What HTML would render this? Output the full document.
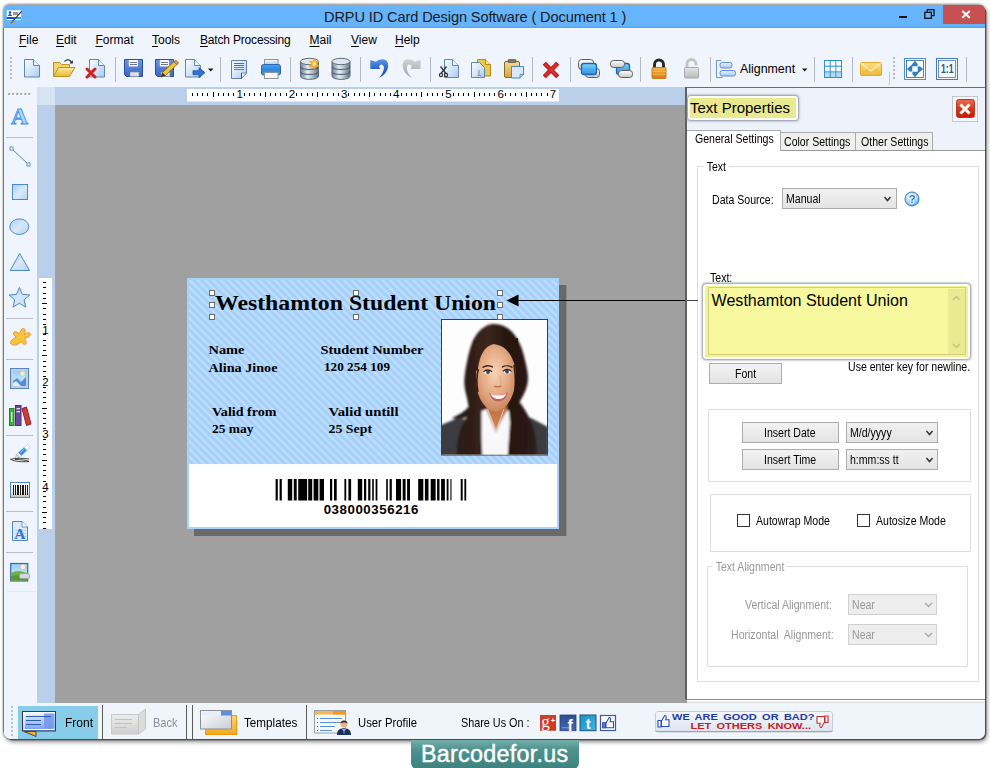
<!DOCTYPE html>
<html lang="en">
<head>
<meta charset="utf-8">
<title>DRPU ID Card Design Software ( Document 1 )</title>
<style>
*{box-sizing:border-box;margin:0;padding:0}
html,body{width:990px;height:768px;background:#fff;overflow:hidden}
body{position:relative;font-family:"Liberation Sans",sans-serif;font-size:12px;color:#000}
.abs,.abs div,.abs svg{position:absolute}
.t{position:absolute;white-space:nowrap;line-height:1}
u{text-decoration:underline;text-underline-offset:2px}
/* window */
#win{left:4px;top:5px;width:981px;height:734px;background:#f0f4fc;border-radius:6px 6px 7px 7px;
 box-shadow:1.300px 1.300px 0 0 #4d4d4d,2px 2.500px 4px 0 rgba(0,0,0,.45),-1px -.5px 2.500px 0 rgba(0,0,0,.42)}
#title{left:0;top:0;width:981px;height:23px;background:#65b4fc;border-radius:5px 5px 0 0}
#titletxt{font-size:14.6px;letter-spacing:-.12px;color:#1a1a1a;left:320px;top:4.500px}
#close{left:939px;top:0;width:42px;height:19px;background:#c75050;border-radius:0 5px 0 0}
/* menu */
.menu{font-size:12px;top:29px;color:#000}
/* toolbar */
.sep{width:1px;background:#a9b4c6;top:53px;height:27px}
/* main regions */
#hr{left:33px;top:82px;width:650px;height:18px;background:#b9cfea}
#hrc{left:33px;top:82px;width:18px;height:18px;background:#d6e3f2}
#vr{left:33px;top:100px;width:18px;height:598px;background:#b9cfea}
#canvas{left:51px;top:100px;width:632px;height:598px;background:#a0a0a0}
#panel{left:681px;top:82px;width:300px;height:613px;background:#fff;border-left:2px solid #5f5f5f;border-top:1.500px solid #6a6a6a;border-bottom:1px solid #8c8c8c}
#bottom{left:0;top:698px;width:981px;height:36px;background:#f0f4fb;border-radius:0 0 7px 7px}
.bt{font-size:12.800px;transform-origin:0 0}
#wm{left:410.500px;top:739.500px;width:168.500px;height:29.500px;background:linear-gradient(#74aeaa,#4e918d 35%,#3d827e);border-radius:0 0 6px 6px}
#wmt{left:10.500px;top:3.400px;font-size:23.300px;color:#fff;letter-spacing:.28px;-webkit-text-stroke:.45px #fff}
</style>
</head>
<body>
<div id="win" class="abs">
  <div style="left:-1px;top:23px;width:1px;height:704px;background:#7a7a7a"></div>
  <div id="title"></div>
  <div id="titletxt" class="t">DRPU ID Card Design Software ( Document 1 )</div>
  <div id="close"></div>
  <svg id="titlesvg" style="left:-4px;top:-5px" width="990" height="30" viewBox="0 0 990 30">
<rect x="4" y="26.500" width="981" height="1.500" fill="#5ea6ee"/>
<!-- app icon -->
<rect x="6.800" y="10.300" width="14.400" height="9.800" fill="#fff"/><rect x="6.800" y="17" width="14.400" height="2" fill="#2f9cf0"/><rect x="6.800" y="17" width="7.500" height="2" fill="#0a4fe0"/>
<circle cx="10" cy="12.600" r="1.300" fill="#1d4fc0"/><path d="M8 16c0-2.300 4-2.300 4 0z" fill="#1d4fc0"/><rect x="13" y="12" width="5.300" height="3.200" fill="#9a9a9a"/>
<path d="M21.600 11.400l-9 10" stroke="#3a2a20" stroke-width="1.100"/><path d="M13.200 20.600l-2.700 2.200 1.500 .2z" fill="#a8642a" stroke="#a8642a" stroke-width=".8"/>
<!-- controls -->
<rect x="899" y="16" width="8" height="2" fill="#111"/>
<rect x="924.800" y="12.300" width="6.600" height="6" fill="none" stroke="#111" stroke-width="1.300"/><path d="M927.300 12v-2.300h6.700v6h-2.300" fill="none" stroke="#111" stroke-width="1.300"/>
<path d="M962.300 11l7.400 6.800M969.700 11l-7.400 6.800" stroke="#fff" stroke-width="2"/>
</svg>
  <!-- MENU -->
  <div id="menubar">
    <span class="t menu" style="left:15px"><u>F</u>ile</span>
    <span class="t menu" style="left:52px"><u>E</u>dit</span>
    <span class="t menu" style="left:91.500px"><u>F</u>ormat</span>
    <span class="t menu" style="left:148px"><u>T</u>ools</span>
    <span class="t menu" style="left:196px;letter-spacing:-.18px"><u>B</u>atch Processing</span>
    <span class="t menu" style="left:305.500px"><u>M</u>ail</span>
    <span class="t menu" style="left:347px"><u>V</u>iew</span>
    <span class="t menu" style="left:391px"><u>H</u>elp</span>
  </div>
  <!-- TOOLBAR -->
  <div id="toolbar"><svg id="tbsvg" style="left:-4px;top:-5px" width="990" height="100" viewBox="0 0 990 100">
<defs>
 <linearGradient id="gPage" x1="0" y1="0" x2="1" y2="1"><stop offset="0" stop-color="#fbfdff"/><stop offset=".55" stop-color="#d3e4f7"/><stop offset="1" stop-color="#a9c9ef"/></linearGradient>
 <linearGradient id="gFold" x1="0" y1="0" x2="0" y2="1"><stop offset="0" stop-color="#fbe9a0"/><stop offset="1" stop-color="#e9b92e"/></linearGradient>
 <linearGradient id="gFlop" x1="0" y1="0" x2="0" y2="1"><stop offset="0" stop-color="#6a97e6"/><stop offset="1" stop-color="#3a64c6"/></linearGradient>
 <linearGradient id="gDb" x1="0" y1="0" x2="1" y2="0"><stop offset="0" stop-color="#8f9aa3"/><stop offset=".45" stop-color="#eef2f4"/><stop offset="1" stop-color="#6f7d88"/></linearGradient>
 <linearGradient id="gLock" x1="0" y1="0" x2="0" y2="1"><stop offset="0" stop-color="#f7b64a"/><stop offset="1" stop-color="#dc7a10"/></linearGradient>
 <linearGradient id="gUnlock" x1="0" y1="0" x2="0" y2="1"><stop offset="0" stop-color="#e6e6e6"/><stop offset="1" stop-color="#b9b9b9"/></linearGradient>
 <linearGradient id="gBlueR" x1="0" y1="0" x2="0" y2="1"><stop offset="0" stop-color="#86d6fb"/><stop offset=".5" stop-color="#4fb0ee"/><stop offset="1" stop-color="#3a94de"/></linearGradient>
 <linearGradient id="gGrayR" x1="0" y1="0" x2="0" y2="1"><stop offset="0" stop-color="#ffffff"/><stop offset="1" stop-color="#c9c9c9"/></linearGradient>
 <linearGradient id="gEnv" x1="0" y1="0" x2="0" y2="1"><stop offset="0" stop-color="#fbe08a"/><stop offset="1" stop-color="#f0b731"/></linearGradient>
 <linearGradient id="gClip" x1="0" y1="0" x2="0" y2="1"><stop offset="0" stop-color="#f3d98f"/><stop offset="1" stop-color="#d9a441"/></linearGradient>
</defs>
<!-- grip -->
<g fill="#b4bac6"><rect x="10" y="57" width="2" height="2"/><rect x="10" y="61" width="2" height="2"/><rect x="10" y="65" width="2" height="2"/><rect x="10" y="69" width="2" height="2"/><rect x="10" y="73" width="2" height="2"/><rect x="10" y="77" width="2" height="2"/></g>
<!-- separators -->
<g stroke="#b4b9c3" stroke-width="1">
<path d="M115.5 57v25M220.5 57v25M290.5 57v25M360.5 57v25M430.5 57v25M532.5 57v25M570.5 57v25M640.5 57v25M710.5 57v25M814.5 57v25M852.5 57v25M966.5 57v25"/>
</g>
<path d="M889.5 72v13" stroke="#c4cad6" stroke-width="1"/>
<g fill="#b4bac6"><rect x="893" y="57" width="2" height="2"/><rect x="893" y="61" width="2" height="2"/><rect x="893" y="65" width="2" height="2"/><rect x="893" y="69" width="2" height="2"/><rect x="893" y="73" width="2" height="2"/><rect x="893" y="77" width="2" height="2"/></g>
<!-- new -->
<path d="M24.5 59.5h9l6 6v11.5h-15z" fill="url(#gPage)" stroke="#5a86c2"/><path d="M33.5 59.5v6h6" fill="#eaf2fb" stroke="#5a86c2"/>
<!-- open -->
<path d="M53.5 76.5v-14h6l2 2h8v4" fill="#f3d46b" stroke="#b8961f"/><path d="M53.5 76.500l5-9h16.500l-5.500 9z" fill="url(#gFold)" stroke="#b8961f"/>
<path d="M64.500 61.500c2-2.500 5.500-2.500 7 .8" fill="none" stroke="#222" stroke-width="1.100"/><path d="M72.800 60.200v3.200h-3.200z" fill="#222"/>
<!-- close doc -->
<path d="M89.500 59.500h9l6 6v11.500h-15z" fill="url(#gPage)" stroke="#5a86c2"/><path d="M98.500 59.500v6h6" fill="#eaf2fb" stroke="#5a86c2"/>
<path d="M87 69l8 8M95 69l-8 8" stroke="#cf1f1f" stroke-width="3" stroke-linecap="round"/>
<!-- save -->
<g id="flop"><path d="M124.500 59.500h18v17h-16l-2-2z" fill="url(#gFlop)" stroke="#2a4f9c"/><rect x="128.800" y="60" width="9.200" height="6.500" fill="#f4f6fb"/><path d="M130 62.500h7M130 64.500h7" stroke="#77797f"/><rect x="130" y="72" width="9" height="4.500" fill="#dfe4d8" stroke="#7f8aa6" stroke-width=".6"/></g>
<!-- save edit -->
<use href="#flop" x="31"/>
<path d="M161 77l1.500-4.500 11.500-11 3 3-11.500 11z" fill="#f2c531" stroke="#7a5a10" stroke-width=".8"/><path d="M174 61.500l1.800-1.500 3 3-1.800 1.500z" fill="#e48a8a" stroke="#7a5a10" stroke-width=".6"/><path d="M161 77l1.500-4.500 3 3z" fill="#333"/>
<!-- export -->
<path d="M185.500 59.500h9l6 6v11.500h-15z" fill="url(#gPage)" stroke="#5a86c2"/><path d="M194.500 59.500v6h6" fill="#eaf2fb" stroke="#5a86c2"/>
<path d="M193 70.800h6v-3l6 4.900-6 4.900v-3h-6z" fill="#2f73d6" stroke="#1b4fa6" stroke-width=".8"/>
<path d="M208 68.500h5.400l-2.700 3z" fill="#111"/>
<!-- note doc -->
<path d="M231.500 60.500h15v12.500l-5 5.500h-10z" fill="url(#gPage)" stroke="#5f7fb8"/><path d="M234 63.500h10M234 65.500h10" stroke="#2f6fe0" stroke-width="1"/><path d="M234 67.500h10M234 69.500h10" stroke="#3a9a8a" stroke-width="1"/><path d="M246.500 73h-5v5.500z" fill="#f4f7fc" stroke="#5f7fb8" stroke-width=".8"/><path d="M241.500 73v5.500" stroke="#3a4f80" stroke-width="1"/>
<!-- printer -->
<defs><linearGradient id="gPrn" x1="0" y1="0" x2="0" y2="1"><stop offset="0" stop-color="#4fa0ea"/><stop offset=".5" stop-color="#2f86de"/><stop offset="1" stop-color="#4a9ae6"/></linearGradient><linearGradient id="gPap" x1="0" y1="0" x2="0" y2="1"><stop offset="0" stop-color="#fdfdfd"/><stop offset="1" stop-color="#b9bcc4"/></linearGradient></defs>
<rect x="264.500" y="59.500" width="13.500" height="6" fill="url(#gPap)" stroke="#8f939b"/><rect x="261.500" y="64.500" width="19" height="10.500" rx="2" fill="url(#gPrn)" stroke="#2769b4"/><rect x="264.500" y="72.500" width="13.500" height="6" fill="#f7f7f7" stroke="#8f939b"/>
<!-- db1 -->
<defs><linearGradient id="gDb2" x1="0" y1="0" x2="1" y2="0"><stop offset="0" stop-color="#6f8498"/><stop offset=".4" stop-color="#e6edf2"/><stop offset=".7" stop-color="#a9b8c6"/><stop offset="1" stop-color="#5f7386"/></linearGradient><radialGradient id="gStar"><stop offset="0" stop-color="#fffbe0"/><stop offset=".45" stop-color="#fbc02a"/><stop offset="1" stop-color="#f39a12"/></radialGradient></defs>
<g id="db"><path d="M300.500 61.500v14.500c0 4.500 18 4.500 18 0v-14.500" fill="url(#gDb2)" stroke="#5a6c7d"/><ellipse cx="309.500" cy="61.500" rx="9" ry="3.200" fill="#dfe7ee" stroke="#5a6c7d"/><path d="M300.500 66.500c0 4 18 4 18 0M300.500 71.500c0 4 18 4 18 0" fill="none" stroke="#4f6072" stroke-width="1.100"/></g>
<path d="M314.300 58.500l1.300 3.200 3.400-.6-2.100 2.700 2.100 2.700-3.400-.6-1.300 3.200-1.300-3.200-3.400 .6 2.100-2.700-2.100-2.700 3.400 .6z" fill="url(#gStar)" stroke="#f6a61c" stroke-width=".8" stroke-linejoin="round"/>
<use href="#db" x="31.500"/>
<!-- undo -->
<defs><linearGradient id="gUndo" x1="0" y1="0" x2="0" y2="1"><stop offset="0" stop-color="#5a95ea"/><stop offset=".5" stop-color="#2c66cc"/><stop offset="1" stop-color="#1a4aa8"/></linearGradient>
<linearGradient id="gRedo" x1="0" y1="0" x2="0" y2="1"><stop offset="0" stop-color="#cfd1d3"/><stop offset="1" stop-color="#a2a5a8"/></linearGradient></defs>
<path d="M370.300 60L370.300 69L380.200 69C378.500 66.500 379.500 64.800 381.500 64.600C385.500 65.500 384.500 72 379 78C386 74.500 389 68.500 388 63.500C387 59 381.500 57.800 376 61.800Z" fill="url(#gUndo)"/>
<!-- redo -->
<path transform="translate(790.800 0) scale(-1 1)" d="M370.300 60L370.300 69L380.200 69C378.500 66.500 379.500 64.800 381.500 64.600C385.500 65.500 384.500 72 379 78C386 74.500 389 68.500 388 63.500C387 59 381.500 57.800 376 61.800Z" fill="url(#gRedo)"/>
<!-- cut -->
<path d="M444.500 59.500h8l6 6v12h-14z" fill="url(#gPage)" stroke="#5a86c2"/><path d="M452.500 59.500v6h6" fill="#eaf2fb" stroke="#5a86c2"/>
<path d="M440.500 66.500l5.500 7M446.500 66.500l-5.500 7" stroke="#333" stroke-width="1.300"/><circle cx="441" cy="75" r="1.600" fill="none" stroke="#333" stroke-width="1.200"/><circle cx="446" cy="75" r="1.600" fill="none" stroke="#333" stroke-width="1.200"/>
<!-- copy -->
<path d="M477.500 59.500h8l5 5v11.500h-13z" fill="#efc84a" stroke="#b18b1d"/><path d="M485.500 59.500v5h5" fill="#f9e7a6" stroke="#b18b1d"/>
<path d="M471.500 62.500h8l5 5v10h-13z" fill="url(#gPage)" stroke="#5a86c2"/><path d="M479 70v5M477.500 75.500h3.500" stroke="#8f8f8f" stroke-width="1"/>
<!-- paste -->
<rect x="504.500" y="61.500" width="15" height="16" rx="1.500" fill="url(#gClip)" stroke="#8a6a24"/><rect x="508" y="59.500" width="8" height="3" rx="1" fill="#777" stroke="#444" stroke-width=".6"/>
<path d="M511.500 66.500h12v8l-3.500 3.500h-8.500z" fill="#d9e8fb" stroke="#4f82c8"/><path d="M523.500 74.500h-3.500v3.500" fill="#b7d0f0" stroke="#4f82c8" stroke-width=".8"/>
<!-- delete X -->
<path d="M544.300 63.300l13.400 13.400M557.700 63.300l-13.400 13.400" stroke="#b81414" stroke-width="4.400" stroke-linecap="butt"/><path d="M545 64l12 12M557 64l-12 12" stroke="#e23030" stroke-width="2.200" stroke-linecap="butt"/>
<!-- bring front -->
<rect x="578.500" y="59.500" width="15" height="10" rx="3" fill="url(#gGrayR)" stroke="#5e5e5e"/><rect x="585.500" y="68.500" width="14" height="9" rx="3" fill="url(#gGrayR)" stroke="#5e5e5e"/>
<rect x="581.500" y="63.500" width="15" height="11" rx="2.500" fill="url(#gBlueR)" stroke="#1767b4" stroke-width="1.300"/>
<!-- send back -->
<rect x="616.500" y="63.500" width="13" height="11" rx="2.500" fill="url(#gBlueR)" stroke="#1767b4" stroke-width="1.300"/>
<rect x="610.500" y="60.500" width="14" height="7" rx="3" fill="url(#gGrayR)" stroke="#5e5e5e"/><rect x="618.500" y="70.500" width="14" height="7" rx="3" fill="url(#gGrayR)" stroke="#5e5e5e"/>
<!-- lock -->
<path d="M654.500 68.500v-4a4.500 4.500 0 0 1 9 0v4" fill="none" stroke="#262626" stroke-width="2.900"/><rect x="652" y="67.500" width="14" height="11" rx="1" fill="url(#gLock)" stroke="#c06a0c" stroke-width=".8"/><path d="M652.500 71.500h13M652.500 74.500h13" stroke="#f9c76a" stroke-width=".7" opacity=".8"/>
<!-- unlock -->
<path d="M687 68v-4a4.500 4.500 0 0 1 9 0v1.500" fill="none" stroke="#c4c4c4" stroke-width="2.900"/><rect x="684.500" y="67.500" width="14" height="10.500" rx="1" fill="url(#gUnlock)" stroke="#a9a9a9"/>
<!-- alignment -->
<defs><linearGradient id="gAl" x1="0" y1="0" x2="0" y2="1"><stop offset="0" stop-color="#e4f0fc"/><stop offset="1" stop-color="#a9cdf4"/></linearGradient></defs>
<path d="M721.500 60.500h-5v17h6" fill="none" stroke="#6f95cc"/><rect x="720" y="62.500" width="12" height="5.500" rx="2.200" fill="url(#gAl)" stroke="#5f8dcf"/><rect x="720" y="70.500" width="15.500" height="5.500" rx="2.200" fill="url(#gAl)" stroke="#5f8dcf"/>
<path d="M802 68.500h5.400l-2.700 3z" fill="#111"/>
<!-- grid -->
<rect x="824" y="60" width="18" height="18" fill="#2f8fd0"/><g fill="#f2f9fe"><rect x="825" y="61" width="4.700" height="4.700"/><rect x="830.700" y="61" width="4.700" height="4.700"/><rect x="836.300" y="61" width="4.700" height="4.700"/><rect x="825" y="66.700" width="4.700" height="4.700"/><rect x="830.700" y="66.700" width="4.700" height="4.700"/><rect x="836.300" y="66.700" width="4.700" height="4.700"/></g><g fill="#b4dbf3"><rect x="825" y="72.300" width="4.700" height="4.700"/><rect x="830.700" y="72.300" width="4.700" height="4.700"/><rect x="836.300" y="72.300" width="4.700" height="4.700"/></g>
<!-- envelope -->
<rect x="860.500" y="62.500" width="21" height="13" rx="1" fill="url(#gEnv)" stroke="#e3a82a"/><path d="M861 63l10 8 10-8" fill="none" stroke="#fdf0c0" stroke-width="1.200"/><path d="M861 75l7.500-6M881 75l-7.500-6" stroke="#e9b546" stroke-width="1"/>
<!-- fit -->
<rect x="904.500" y="58.500" width="21" height="21" fill="#fff" stroke="#4a90cf"/><rect x="906.500" y="60.500" width="17" height="17" fill="none" stroke="#2e5f9e" stroke-width=".8"/>
<path d="M915 60.800l4.800 5.700h-9.600zM915 77.200l4.800-5.700h-9.600zM906.800 69l5.700-4.800v9.600zM923.200 69l-5.700-4.800v9.600z" fill="#2f7fc4"/><rect x="912.500" y="66.500" width="5" height="5" fill="#fff"/>
<!-- 1:1 -->
<rect x="936.500" y="58.500" width="21" height="21" fill="#f4f8fd" stroke="#4a78b8"/><rect x="938.500" y="60.500" width="17" height="17" fill="none" stroke="#4a78b8" stroke-width=".8"/>
<text x="941" y="73.400" font-family="Liberation Sans, sans-serif" font-weight="bold" font-size="12" textLength="12.500" lengthAdjust="spacingAndGlyphs" fill="#1f5a86">1:1</text>
</svg>
<span class="t" id="aligntxt" style="left:736px;top:57.500px;font-size:12.400px">Alignment</span>
</div>
  <!-- LEFTBAR -->
  <div id="leftbar"><svg id="lbsvg" style="left:-4px;top:-5px" width="60" height="710" viewBox="0 0 60 710">
<defs>
 <linearGradient id="gShape" x1="0" y1="0" x2="1" y2="1"><stop offset="0" stop-color="#a9cdf3"/><stop offset=".5" stop-color="#d8e9fa"/><stop offset="1" stop-color="#b5d4f4"/></linearGradient>
 <linearGradient id="gSky" x1="0" y1="0" x2="0" y2="1"><stop offset="0" stop-color="#8fd0f5"/><stop offset="1" stop-color="#dff1fb"/></linearGradient>
</defs>
<!-- grip -->
<g fill="#fff"><rect x="8.9" y="94" width="2" height="2"/><rect x="12.9" y="94" width="2" height="2"/><rect x="17.0" y="94" width="2" height="2"/><rect x="21.0" y="94" width="2" height="2"/><rect x="25.1" y="94" width="2" height="2"/><rect x="29.1" y="94" width="2" height="2"/></g><g fill="#a4a8b0"><rect x="8.1" y="93" width="2" height="2"/><rect x="12.1" y="93" width="2" height="2"/><rect x="16.2" y="93" width="2" height="2"/><rect x="20.2" y="93" width="2" height="2"/><rect x="24.3" y="93" width="2" height="2"/><rect x="28.3" y="93" width="2" height="2"/></g>
<!-- separators -->
<path d="M6 137.500h27M6 318.500h27M6 359.500h27M6 435.500h27M6 511.500h27M6 552.500h27" stroke="#b9bcc2" stroke-width="1"/>
<path d="M7 591.500h28" stroke="#e4e8ef" stroke-width="1"/>
<!-- A -->
<text x="19.400" y="123.500" font-family="Liberation Serif, serif" font-weight="bold" font-size="23.500" text-anchor="middle" fill="#b4d6f7" stroke="#3f92ee" stroke-width=".9" paint-order="fill">A</text>
<!-- line -->
<path d="M11.500 148.500l17 16" stroke="#4a86c6" stroke-width="1"/><rect x="10" y="147" width="3" height="3" fill="#fff" stroke="#3f7fc0" stroke-width=".8"/><rect x="27" y="163" width="3" height="3" fill="#fff" stroke="#3f7fc0" stroke-width=".8"/>
<!-- rect -->
<rect x="12.500" y="184.500" width="15" height="15" fill="url(#gShape)" stroke="#4b8acb"/>
<!-- ellipse -->
<ellipse cx="19.300" cy="226.700" rx="9.500" ry="7.800" fill="url(#gShape)" stroke="#4b8acb"/>
<!-- triangle -->
<path d="M19.700 253.500l9.800 17h-19.300z" fill="url(#gShape)" stroke="#4b8acb"/>
<!-- star -->
<path d="M19.400 287.500l2.900 6.800 7.400 .7-5.600 4.900 1.700 7.200-6.400-3.800-6.400 3.800 1.700-7.200-5.600-4.900 7.400-.7z" fill="url(#gShape)" stroke="#4b8acb" stroke-linejoin="round"/>
<!-- splat -->
<path d="M22 329c2-1.500 3.500 0 3 2.500l-.8 3c2-1 4-2.500 5.500-1.500 1.500 1.200 .5 3-1.500 4l-4 2c1.500 1.500 3 3.500 1.500 5-1.500 1.200-3.500-.5-4.500-2.500-1.500 1.500-3.500 3-6 3.500-3 .5-5-1-4.500-3 .5-2 3-3.500 5.500-5-1.500-1-3.500-2.500-2.500-4.500 1.200-1.800 4 0 5.500 1.200z" fill="#f9c63a" stroke="#f0903a" stroke-width="1" stroke-linejoin="round"/>
<!-- image icon -->
<rect x="10.500" y="368.500" width="18" height="20" fill="#c9ccd2" stroke="#4f86c4"/><rect x="13" y="371" width="13" height="15" fill="url(#gSky)"/><path d="M13 381l4-3 4 4 5-5v9h-13z" fill="#4f8fdc"/><path d="M13 383l3-2 5 5h-8z" fill="#dfeefb"/><circle cx="22.500" cy="373.500" r="2.300" fill="#fde6c8"/>
<!-- books -->
<rect x="9.500" y="408.500" width="4.500" height="17" fill="#3fae3f" stroke="#2a7f2a"/><rect x="11" y="412" width="1.500" height="10" fill="#c6f0c6"/>
<rect x="15.500" y="405.500" width="5.500" height="20" fill="#6a4a9a" stroke="#48307a"/><rect x="16.500" y="408" width="3.500" height="1.300" fill="#e6dcf5"/><rect x="16.500" y="411" width="3.500" height="1.300" fill="#e6dcf5"/>
<path d="M22 408.500l4.500-1.500 4.500 17-4.500 1.500z" fill="#cf3a3a" stroke="#962222"/>
<!-- pen -->
<path d="M14.7 458.8 L19.5 457.0 L16.9 454.2 Z" fill="#e9edf3" stroke="#7b8596" stroke-width=".5"/><path d="M19.5 457.0 L21.3 455.4 L18.7 452.6 L16.9 454.2 Z" fill="#f4f7fb" stroke="#9aa5b8" stroke-width=".4"/><path d="M21.3 455.4 L26.8 450.3 L24.3 447.5 L18.7 452.6 Z" fill="#2f8ef0" stroke="#1f6fd0" stroke-width=".4"/><path d="M26.8 450.3 L30.3 447.2 L27.7 444.4 L24.3 447.5 Z" fill="#fbfcfe" stroke="#a7b0c0" stroke-width=".5"/><path d="M20.0 452.9 L24.5 448.8" stroke="#8cc6fa" stroke-width=".9"/><path d="M10.500 459.300c5-1.300 12-1.300 18.500-.3M10.500 459.300c4 2.400 12 2.700 18.500 2.200c-3-1.500-8-2-14-2" fill="none" stroke="#1a1a1a" stroke-width=".8"/>
<!-- barcode -->
<defs><linearGradient id="gBc" x1="0" y1="0" x2="0" y2="1"><stop offset="0" stop-color="#fff"/><stop offset=".6" stop-color="#f4f4f4"/><stop offset="1" stop-color="#b9b9b9"/></linearGradient></defs><rect x="10.500" y="482.500" width="19" height="15" fill="url(#gBc)" stroke="#4f86c4"/>
<g fill="#1a1a1a"><rect x="13" y="485" width="1" height="10"/><rect x="15" y="485" width="1" height="10"/><rect x="17" y="485" width="2" height="10"/><rect x="20" y="485" width="1" height="10"/><rect x="22" y="485" width="2" height="10"/><rect x="25" y="485" width="1" height="10"/><rect x="27" y="485" width="1" height="10"/></g>
<!-- doc A -->
<path d="M12.500 521.500h9.500l5.500 5.500v13.500h-15z" fill="#dbe9fa" stroke="#4f86c4"/><path d="M22 521.500v5.500h5.500" fill="#f4f9ff" stroke="#4f86c4" stroke-width=".8"/>
<path d="M15 530.500h11M15 533.500h11M15 536.500h11" stroke="#b0c4dc" stroke-width=".7"/>
<text x="19.800" y="539" font-family="Liberation Serif, serif" font-weight="bold" font-size="15.500" text-anchor="middle" fill="#2f78cf">A</text>
<!-- picture -->
<rect x="10.700" y="563.500" width="17" height="17.500" fill="url(#gSky)" stroke="#3a68b8" stroke-width="1.200"/><path d="M11.300 573c4-2.500 9-2.500 15.800 0v7.400h-15.800z" fill="#6fae3c"/><path d="M11.300 576c5-1.500 10-1 15.800 1v3.400h-15.800z" fill="#5a982e"/><circle cx="23" cy="567" r="2.800" fill="#fdf3e6" stroke="#f0a8a0" stroke-width=".7"/>
<rect x="19.500" y="573.500" width="10" height="5" rx="1.500" fill="#d5d8dd" stroke="#9aa0aa" stroke-width=".8"/>
</svg>
</div>
  <!-- RULERS + CANVAS -->
  <div id="hr"></div><div id="hrc"></div><div id="vr"></div>
  <div id="canvas"></div>
<svg id="rulsvg" style="left:-4px;top:-5px" width="700" height="710" viewBox="0 0 700 710">
<rect x="187" y="89" width="372" height="12.500" fill="#fff"/>
<rect x="39" y="278" width="13" height="251" fill="#fff"/>
<g id="hticks" stroke="#000" stroke-width="1"><path d="M192.5 93v3M197.5 93v3M202.5 93v3M207.5 93v3M213.5 92v5M218.5 93v3M223.5 93v3M228.5 93v3M233.5 93v3M244.5 93v3M249.5 93v3M254.5 93v3M260.5 93v3M265.5 92v5M270.5 93v3M275.5 93v3M280.5 93v3M286.5 93v3M296.5 93v3M301.5 93v3M307.5 93v3M312.5 93v3M317.5 92v5M322.5 93v3M327.5 93v3M333.5 93v3M338.5 93v3M348.5 93v3M354.5 93v3M359.5 93v3M364.5 93v3M369.5 92v5M374.5 93v3M380.5 93v3M385.5 93v3M390.5 93v3M401.5 93v3M406.5 93v3M411.5 93v3M416.5 93v3M421.5 92v5M427.5 93v3M432.5 93v3M437.5 93v3M442.5 93v3M453.5 93v3M458.5 93v3M463.5 93v3M468.5 93v3M474.5 92v5M479.5 93v3M484.5 93v3M489.5 93v3M494.5 93v3M505.5 93v3M510.5 93v3M515.5 93v3M521.5 93v3M526.5 92v5M531.5 93v3M536.5 93v3M541.5 93v3M547.5 93v3"/></g>
<g id="vticks" stroke="#000" stroke-width="1"><path d="M43 282.5h3M43 287.5h3M43 293.5h3M43 298.5h3M42 303.5h5M43 308.5h3M43 314.5h3M43 319.5h3M43 324.5h3M43 334.5h3M43 340.5h3M43 345.5h3M43 350.5h3M42 355.5h5M43 361.5h3M43 366.5h3M43 371.5h3M43 376.5h3M43 387.5h3M43 392.5h3M43 397.5h3M43 402.5h3M42 408.5h5M43 413.5h3M43 418.5h3M43 423.5h3M43 428.5h3M43 439.5h3M43 444.5h3M43 449.5h3M43 454.5h3M42 460.5h5M43 465.5h3M43 470.5h3M43 475.5h3M43 481.5h3M43 491.5h3M43 496.5h3M43 501.5h3M43 507.5h3M42 512.5h5M43 517.5h3M43 522.5h3M43 528.5h3"/></g>
<g font-family="Liberation Sans, sans-serif" font-size="11.500" fill="#000" text-anchor="middle"><text x="239.7" y="97.600">1</text><text x="291.9" y="97.600">2</text><text x="344.1" y="97.600">3</text><text x="396.3" y="97.600">4</text><text x="448.5" y="97.600">5</text><text x="500.7" y="97.600">6</text><text x="552.9" y="97.600">7</text></g>
<g font-family="Liberation Sans, sans-serif" font-size="11.500" fill="#000" text-anchor="middle"><text x="45.500" y="333.9">1</text><text x="45.500" y="386.1">2</text><text x="45.500" y="438.3">3</text><text x="45.500" y="490.5">4</text></g>
</svg>

  <!-- CARD -->
  <div id="cardwrap"><svg id="cardsvg" style="left:-4px;top:-5px" width="720" height="560" viewBox="0 0 720 560">
<defs>
 <pattern id="stripes" width="7.700" height="7.700" patternUnits="userSpaceOnUse" patternTransform="translate(189.700 280)">
  <rect width="7.700" height="7.700" fill="#a4d0fc"/>
  <path d="M-2 -2l12 12M-9.700 -2l12 12M5.700 -2l12 12" stroke="#c0dfff" stroke-width="2.300"/>
 </pattern>
 <filter id="blur1" x="-20%" y="-20%" width="140%" height="140%"><feGaussianBlur stdDeviation="1.200"/></filter>
 <filter id="blur2" x="-20%" y="-20%" width="140%" height="140%"><feGaussianBlur stdDeviation=".6"/></filter>
 <clipPath id="photoclip"><rect x="442" y="320" width="105" height="134.500"/></clipPath>
</defs>
<!-- shadow -->
<rect x="194" y="285" width="372.400" height="251" fill="#696969"/>
<!-- card -->
<rect x="187" y="278" width="372" height="251" fill="#a9d2fb"/>
<rect x="189" y="280" width="368" height="184" fill="url(#stripes)"/>
<rect x="189" y="464" width="368" height="63" fill="#fff"/>
<!-- barcode -->
<g fill="#000" id="bars"><rect x="275.6" y="479" width="2.2" height="21.500"/><rect x="279.6" y="479" width="2.2" height="21.500"/><rect x="287.8" y="479" width="4.4" height="21.500"/><rect x="293.8" y="479" width="2.9" height="21.500"/><rect x="298.2" y="479" width="8.9" height="21.500"/><rect x="308.2" y="479" width="4.0" height="21.500"/><rect x="313.6" y="479" width="4.7" height="21.500"/><rect x="319.6" y="479" width="4.4" height="21.500"/><rect x="330.0" y="479" width="2.2" height="21.500"/><rect x="334.0" y="479" width="2.7" height="21.500"/><rect x="344.4" y="479" width="1.8" height="21.500"/><rect x="348.4" y="479" width="2.7" height="21.500"/><rect x="357.8" y="479" width="4.4" height="21.500"/><rect x="364.0" y="479" width="2.2" height="21.500"/><rect x="368.2" y="479" width="2.2" height="21.500"/><rect x="372.2" y="479" width="1.6" height="21.500"/><rect x="375.6" y="479" width="1.8" height="21.500"/><rect x="386.2" y="479" width="1.6" height="21.500"/><rect x="389.6" y="479" width="2.2" height="21.500"/><rect x="396.0" y="479" width="5.1" height="21.500"/><rect x="402.7" y="479" width="2.9" height="21.500"/><rect x="407.1" y="479" width="2.9" height="21.500"/><rect x="418.2" y="479" width="5.1" height="21.500"/><rect x="424.9" y="479" width="3.6" height="21.500"/><rect x="430.7" y="479" width="4.9" height="21.500"/><rect x="437.1" y="479" width="2.4" height="21.500"/><rect x="441.1" y="479" width="3.8" height="21.500"/><rect x="446.7" y="479" width="1.8" height="21.500"/><rect x="450.4" y="479" width="1.1" height="21.500"/><rect x="460.7" y="479" width="2.0" height="21.500"/><rect x="464.4" y="479" width="1.8" height="21.500"/></g>
<text x="371.300" y="513.500" font-family="Liberation Sans, sans-serif" font-weight="bold" font-size="13.300" letter-spacing=".55" text-anchor="middle" fill="#000">038000356216</text>
<!-- text -->
<g font-family="Liberation Serif, serif" font-weight="bold" fill="#000">
<text id="ctitle" x="215" y="310" font-size="20" textLength="281" lengthAdjust="spacingAndGlyphs">Westhamton Student Union</text>
<g font-size="13">
<text x="208.500" y="353.500" textLength="36" lengthAdjust="spacingAndGlyphs">Name</text>
<text x="208.500" y="371.500" textLength="69" lengthAdjust="spacingAndGlyphs">Alina Jinoe</text>
<text x="320.500" y="353.500" textLength="103" lengthAdjust="spacingAndGlyphs">Student Number</text>
<text x="324" y="370.500" textLength="66" lengthAdjust="spacingAndGlyphs">120 254 109</text>
<text x="212" y="415.500" textLength="64.500" lengthAdjust="spacingAndGlyphs">Valid from</text>
<text x="212" y="433" textLength="41.500" lengthAdjust="spacingAndGlyphs">25 may</text>
<text x="328.500" y="415.500" textLength="70" lengthAdjust="spacingAndGlyphs">Valid untill</text>
<text x="328.500" y="433" textLength="43.500" lengthAdjust="spacingAndGlyphs">25 Sept</text>
</g></g>
<!-- photo -->
<rect x="441.500" y="319.500" width="106" height="135.500" fill="#fdfdfd" stroke="#3c3c3c"/>
<g clip-path="url(#photoclip)">
<defs>
<radialGradient id="gFace" cx=".48" cy=".42" r=".62"><stop offset="0" stop-color="#f7d3b5"/><stop offset=".55" stop-color="#e6ab84"/><stop offset="1" stop-color="#c5825a"/></radialGradient>
<linearGradient id="gHair" gradientUnits="userSpaceOnUse" x1="463" y1="0" x2="537" y2="0"><stop offset="0" stop-color="#2a1a15"/><stop offset=".35" stop-color="#3d261d"/><stop offset=".6" stop-color="#24150f"/><stop offset="1" stop-color="#2e1c16"/></linearGradient>
<linearGradient id="gNeck" x1="0" y1="0" x2="0" y2="1"><stop offset="0" stop-color="#b9683a"/><stop offset="1" stop-color="#d78a58"/></linearGradient>
</defs>
<g filter="url(#blur1)">
<!-- jacket -->
<path d="M440 425.500l18-7.500 10 2v38h-28z" fill="#3a3a3f"/><path d="M548 427l-18-9.500-8 3 4 37h22z" fill="#3a3a3f"/>
<path d="M505 440l6 18h-8z" fill="#2e2e33"/>
<!-- hair mass -->
<path d="M494 324C502 324 509 328 513 333C519 340 522 348 524 356C526 364 528 372 528 378C528 386 525 393 519.500 402C524 408 529 416 532 424C536 434 537.500 445 536 458L507.500 458L509 420L498 408L487 420L483 458L457 458C456 446 458 436 461 428C463 424 465 420 467 417C462 419 456 419.500 452 418C459 415 465 411 468.500 407C468 402 467 398 466 394C464.500 388 464 383 464.500 378C465 372 466 366 467 362C468.500 354 470 348 472 343C475 335 481 328 487 325.500C489 324.500 491 324 494 324Z" fill="url(#gHair)"/>
<!-- shirt -->
<path d="M481.500 411l6-2 8.500 22 8-22 5 2 1 12-2.500 35h-25l-1-20z" fill="#f8f8fb"/>
<!-- neck -->
<path d="M487.500 400h19l.5 11-7 12-4 10-4-10-5-12z" fill="url(#gNeck)"/>
</g>
<g filter="url(#blur2)">
<!-- face -->
<path d="M476 376C476 364 478 352 483 347C488 343 504 343 509 347C514 352 515.500 364 515.500 376C515.500 388 513 396 509 402C505 408 500 411.500 495.700 411.500C491 411.500 486 408 482 402C478 396 476 388 476 376Z" fill="url(#gFace)"/>
<!-- hairline -->
<path d="M492.500 344.500C484.500 346.500 479.500 355 477.800 370L474 372L474 340Z" fill="url(#gHair)"/>
<path d="M491.500 344C503 344 511.500 352 514.800 366L518 366L518 338Z" fill="url(#gHair)"/>
<path d="M478 392c-1.500-8-1.500-16 .3-23" stroke="#2b1a14" stroke-width="1.500" fill="none"/>
<path d="M514.500 394c1.200-8 1.200-18-.5-29" stroke="#2b1a14" stroke-width="1.500" fill="none"/>
<!-- collar shadow lines -->
<path d="M487.500 409l8.500 22 8-22" stroke="#d9dbe2" stroke-width=".8" fill="none"/>
</g>
<g filter="url(#blur2)">
<!-- mouth -->
<path d="M489 393c3 1.500 6 2 9.500 2 3.500 0 6.500-.8 9.500-2.500-1 5-5 9-9.500 9-4.500 0-8-3.500-9.500-8.500z" fill="#c4605a"/>
<path d="M490.500 394c3 1 5.500 1.300 8 1.300s5.500-.4 8-1.600c-1.500 3.500-4.500 5.300-8 5.300s-6.500-1.800-8-5z" fill="#fbfbfb"/>
<!-- eyes -->
<ellipse cx="487.800" cy="372.200" rx="4" ry="1.900" fill="#f4ece6"/><ellipse cx="507.200" cy="371.700" rx="4" ry="1.900" fill="#f4ece6"/><circle cx="488" cy="372.100" r="1.900" fill="#34425c"/><circle cx="507" cy="371.600" r="1.900" fill="#34425c"/><path d="M483.500 371.800c2.500-2.300 6-2.300 8.600 0M502.900 371.300c2.500-2.300 6-2.300 8.600 0" stroke="#2a1a14" stroke-width="1.100" fill="none"/>
<path d="M482.500 367.500c3-2 7.500-2 10.500-.3M502 367.200c3-1.800 7.500-1.800 10.500 .3" stroke="#3a2216" stroke-width="1.400" fill="none"/>
<!-- nose -->
<path d="M494 386c1.500 1.200 5.500 1.200 7.500 0" stroke="#b06f48" stroke-width="1.200" fill="none"/>
<path d="M499.800 376c.5 4 1 6.500 .8 9" stroke="#d9a07a" stroke-width="1.100" fill="none" opacity=".7"/>
</g>
</g>
<!-- handles -->
<g fill="#fff" stroke="#6a6a6a" stroke-width="1">
<rect x="209.500" y="290.500" width="5" height="5"/><rect x="353.500" y="290.500" width="5" height="5"/><rect x="497.500" y="290.500" width="5" height="5"/>
<rect x="209.500" y="302.500" width="5" height="5"/><rect x="497.500" y="302.500" width="5" height="5"/>
<rect x="209.500" y="314.500" width="5" height="5"/><rect x="353.500" y="314.500" width="5" height="5"/><rect x="497.500" y="314.500" width="5" height="5"/>
</g>
<!-- arrow -->
<path d="M516 300.500h188" stroke="#000" stroke-width="1"/><path d="M506.500 300.500l12-6v12z" fill="#000"/>
</svg>
</div>
  <!-- PANEL -->
  <div id="panel"><div id="pinner" style="left:-687px;top:-88.500px;width:990px;height:768px">
<style>
#pinner{font-size:12px}
#pinner .t{transform:scaleX(.88);transform-origin:0 0}
#pinner #tp,#pinner #tav{transform:none}
.gb{border:1px solid #dcdcdc;border-radius:1px}
.btn{border:1px solid #acacac;background:linear-gradient(#f3f3f3,#e3e3e3);text-align:center}
.sel{border:1px solid #acacac;background:linear-gradient(#f1f1f1,#e4e4e4)}
.sel.dis{border-color:#d0d0d0;background:#eeeeee}
.gray{color:#989898}
.chev{width:9px;height:6px}
</style>
<!-- Text Properties label -->
<div style="left:687px;top:88px;width:298px;height:62px;background:#eef3fb"></div>
<div style="left:688px;top:96px;width:110px;height:24.500px;background:#fff;border-radius:3px;box-shadow:0 0 2.500px .5px #8a8f99"></div>
<div style="left:690px;top:98px;width:106px;height:20.500px;background:#e9e98f"></div>
<span class="t" id="tp" style="left:690px;top:100.800px;font-size:15px;letter-spacing:0">Text Properties</span>
<!-- close -->
<div style="left:952px;top:96px;width:26px;height:26px;border:1px solid #c3c6cc;background:#f3f6fc"></div>
<div style="left:955.500px;top:99.500px;width:19px;height:19px;background:linear-gradient(#ee6a4c,#d8381c 50%,#c51d08);border-radius:2.500px;border:.5px solid #b03a25"></div>
<svg style="left:958px;top:102px" width="14" height="14" viewBox="0 0 14 14"><path d="M2.500 2.500l9 9M11.500 2.500l-9 9" stroke="#fff" stroke-width="3" stroke-linecap="butt"/></svg>
<!-- tabs -->
<div style="left:687px;top:150px;width:298px;height:1px;background:#9a9a9a"></div>
<div style="left:780px;top:132px;width:76px;height:18.500px;border:1px solid #acacac;border-bottom:none;background:#f0f0f0"></div>
<div style="left:855px;top:132px;width:78px;height:18.500px;border:1px solid #acacac;border-bottom:none;background:#f0f0f0"></div>
<div style="left:687px;top:130px;width:94px;height:21.500px;border:1px solid #acacac;border-left:none;border-bottom:none;background:#fff"></div>
<span class="t" id="tab1" style="left:694.500px;top:133.800px">General Settings</span>
<span class="t" id="tab2" style="left:784px;top:136px">Color Settings</span>
<span class="t" id="tab3" style="left:861px;top:136px">Other Settings</span>
<!-- outer groupbox -->
<div class="gb" style="left:697px;top:166px;width:282px;height:516px"></div>
<span class="t" id="gbt" style="left:704px;top:161px;background:#fff;padding:0 3px">Text</span>
<span class="t" id="ds" style="left:712px;top:194.500px">Data Source:</span>
<div class="sel" style="left:782px;top:188px;width:115px;height:21px"></div>
<span class="t" style="left:786px;top:193.300px">Manual</span>
<svg class="chev" style="left:883px;top:196px" viewBox="0 0 9 6"><path d="M1.500 1l3 3.500 3-3.500" fill="none" stroke="#333" stroke-width="1.500"/></svg>
<!-- help -->
<svg style="left:904px;top:191.500px" width="16" height="16" viewBox="0 0 16 16"><defs><radialGradient id="gHelp" cx=".4" cy=".3" r=".8"><stop offset="0" stop-color="#eaf5ff"/><stop offset=".6" stop-color="#a9d2f8"/><stop offset="1" stop-color="#4f9be6"/></radialGradient></defs><circle cx="8" cy="8" r="7" fill="url(#gHelp)" stroke="#2f77c8"/><text x="8" y="12" font-family="Liberation Sans, sans-serif" font-weight="bold" font-size="11" text-anchor="middle" fill="#1f6fd0" stroke="#fff" stroke-width="1.600" paint-order="stroke">?</text></svg>
<span class="t" id="tl" style="left:709.500px;top:272.800px">Text:</span>
<!-- textarea -->
<div style="left:687px;top:300px;width:11px;height:1px;background:#444"></div>
<div style="left:703px;top:284px;width:267px;height:75px;background:#fff;border-radius:3.500px;box-shadow:0 0 2.500px .5px #8a8f99"></div>
<div style="left:705px;top:286px;width:263px;height:71px;background:#f3f392"></div>
<div style="left:708px;top:287.500px;width:258px;height:68px;background:#f8f89e;border:1px solid #cfcf80"></div>
<div style="left:948px;top:289px;width:17px;height:65px;background:#eaea92"></div>
<svg class="chev" style="left:952px;top:295px" viewBox="0 0 9 6"><path d="M1 5l3.500-3.500L8 5" fill="none" stroke="#c2c284" stroke-width="1.400"/></svg>
<svg class="chev" style="left:952px;top:343px" viewBox="0 0 9 6"><path d="M1 1l3.500 3.500L8 1" fill="none" stroke="#c2c284" stroke-width="1.400"/></svg>
<span class="t" id="tav" style="left:711.500px;top:292.300px;font-size:16.100px;letter-spacing:0">Westhamton Student Union</span>
<!-- font btn -->
<div class="btn" style="left:709px;top:363px;width:73px;height:21px"></div>
<span class="t" style="left:734.500px;top:368.800px">Font</span>
<span class="t" id="hint" style="left:847.500px;top:361.500px">Use enter key for newline.</span>
<!-- group date/time -->
<div class="gb" style="left:708px;top:409px;width:263px;height:73px"></div>
<div class="btn" style="left:742px;top:422px;width:97px;height:21px"></div><span class="t" id="idt" style="left:764px;top:427.5px">Insert Date</span>
<div class="btn" style="left:742px;top:449px;width:97px;height:21px"></div><span class="t" id="itm" style="left:764px;top:454.5px">Insert Time</span>
<div class="sel" style="left:846px;top:422px;width:92px;height:21px"></div><span class="t" style="left:850px;top:427.5px">M/d/yyyy</span>
<svg class="chev" style="left:925px;top:430px" viewBox="0 0 9 6"><path d="M1.500 1l3 3.500 3-3.500" fill="none" stroke="#333" stroke-width="1.500"/></svg>
<div class="sel" style="left:846px;top:449px;width:92px;height:21px"></div><span class="t" style="left:850px;top:454.5px">h:mm:ss tt</span>
<svg class="chev" style="left:925px;top:457px" viewBox="0 0 9 6"><path d="M1.500 1l3 3.500 3-3.500" fill="none" stroke="#333" stroke-width="1.500"/></svg>
<!-- group checkboxes -->
<div class="gb" style="left:710px;top:494px;width:261px;height:58px"></div>
<div style="left:737px;top:514px;width:13px;height:13px;border:1px solid #333;background:#fff"></div>
<span class="t" id="awm" style="left:756px;top:515.500px">Autowrap Mode</span>
<div style="left:857px;top:514px;width:13px;height:13px;border:1px solid #333;background:#fff"></div>
<span class="t" id="asm" style="left:876px;top:515.500px">Autosize Mode</span>
<!-- group text alignment -->
<div class="gb" style="left:707px;top:566px;width:261px;height:101px"></div>
<span class="t gray" id="tal" style="left:713px;top:561.500px;background:#fff;padding:0 3px">Text Alignment</span>
<span class="t gray" id="val" style="left:744.500px;top:599px">Vertical Alignment:</span>
<div class="sel dis" style="left:848px;top:594px;width:89px;height:21px"></div><span class="t gray" style="left:852px;top:599px">Near</span>
<svg class="chev" style="left:924px;top:602px" viewBox="0 0 9 6"><path d="M1 1l3.500 3.500L8 1" fill="none" stroke="#a9a9a9" stroke-width="1.400"/></svg>
<span class="t gray" id="hal" style="left:730.500px;top:629px">Horizontal&nbsp; Alignment:</span>
<div class="sel dis" style="left:848px;top:624px;width:89px;height:21px"></div><span class="t gray" style="left:852px;top:629px">Near</span>
<svg class="chev" style="left:924px;top:632px" viewBox="0 0 9 6"><path d="M1 1l3.500 3.500L8 1" fill="none" stroke="#a9a9a9" stroke-width="1.400"/></svg>
</div>
</div>
  <div style="left:683px;top:695px;width:298px;height:3px;background:#f7f7f7;border-top:1px solid #fff;border-bottom:1px solid #f0f2f6"></div><div style="left:683px;top:696.500px;width:298px;height:1px;background:#dedede"></div>
  <!-- BOTTOM -->
  <div id="bottom"><svg id="botsvg" style="left:-4px;top:-703px" width="990" height="768" viewBox="0 0 990 768">
<defs>
 <linearGradient id="gFront" x1="0" y1="0" x2="0" y2="1"><stop offset="0" stop-color="#fafcff"/><stop offset=".45" stop-color="#b9d0f8"/><stop offset="1" stop-color="#6f9bea"/></linearGradient>
 <linearGradient id="gBack" x1="0" y1="0" x2="0" y2="1"><stop offset="0" stop-color="#ededed"/><stop offset="1" stop-color="#cfcfcf"/></linearGradient>
 <linearGradient id="gTplO" x1="0" y1="0" x2="0" y2="1"><stop offset="0" stop-color="#fbd77a"/><stop offset="1" stop-color="#f5a81c"/></linearGradient>
 <linearGradient id="gTplW" x1="0" y1="0" x2="1" y2="1"><stop offset="0" stop-color="#ffffff"/><stop offset="1" stop-color="#c9cdd6"/></linearGradient>
 <linearGradient id="gBan" x1="0" y1="0" x2="0" y2="1"><stop offset="0" stop-color="#f4f7fc"/><stop offset="1" stop-color="#dde4f0"/></linearGradient>
</defs>
<!-- grip -->
<g fill="#b9bfcb"><rect x="11" y="706" width="2" height="2"/><rect x="11" y="710" width="2" height="2"/><rect x="11" y="714" width="2" height="2"/><rect x="11" y="718" width="2" height="2"/><rect x="11" y="722" width="2" height="2"/><rect x="11" y="726" width="2" height="2"/><rect x="11" y="730" width="2" height="2"/><rect x="11" y="734" width="2" height="2"/></g>
<!-- front button -->
<rect x="18" y="706" width="80" height="33" fill="#87cdea"/>
<rect x="22.500" y="711.500" width="33" height="19.500" fill="url(#gFront)" stroke="#3c3c3c"/>
<rect x="24" y="713" width="30" height="16.500" fill="none" stroke="#fff" stroke-width="1"/>
<rect x="44" y="713.500" width="10.500" height="15" fill="#6f98ea" opacity=".85"/>
<path d="M26 716.500h25M26 720.500h15M26 724.500h15" stroke="#2d5bb5" stroke-width="1.200"/>
<path d="M24 731.500h12v5z" fill="#f4b12a" stroke="#3c3c3c" stroke-width=".9"/>
<!-- separators -->
<path d="M102.500 705v34M186.500 705v34M192.500 705v34M306.500 705v34" stroke="#5c5c5c" stroke-width="1"/>
<!-- back icon -->
<path d="M111.500 714.500h27v19.500h-27z" fill="url(#gBack)" stroke="#c9c9c9"/><path d="M138.500 714.500l7-5.500v20l-7 5z" fill="#dcdcdc" stroke="#c4c4c4"/>
<path d="M115 719.500h17M115 723.500h17M115 727.500h12" stroke="#c2c2c2" stroke-width="1.200"/>
<!-- templates icon -->
<rect x="205.500" y="715.500" width="31" height="19" fill="url(#gTplO)" stroke="#e89a12"/>
<rect x="200.500" y="710.500" width="31" height="18.500" fill="url(#gTplW)" stroke="#8a8f98"/><rect x="201.500" y="711.500" width="29" height="3.500" fill="#e9eefb"/><rect x="221" y="711" width="10" height="4.500" fill="#5b8fe6"/>
<!-- user profile icon -->
<rect x="314.500" y="710.500" width="31" height="22.500" fill="#f6f7fa" stroke="#9a9fa8"/><rect x="315" y="711" width="30" height="3.500" fill="#f6b84a"/><rect x="333" y="711" width="12" height="3.500" fill="#f39a1a"/>
<path d="M320 718.500h22M320 722.500h22M320 726.500h15M320 730.500h12" stroke="#5a8fd0" stroke-width="1"/><path d="M317 718.500h1M317 722.500h1M317 726.500h1M317 730.500h1" stroke="#3a6fb0" stroke-width="1"/>
<path d="M337 735c0-5 3-7 7-7s7 2 7 7z" fill="#1d2f5a"/><circle cx="344" cy="724" r="3.500" fill="#e8b48a"/><path d="M340.500 723.500c0-4 7-4 7 0-1-1.500-6-1.500-7 0z" fill="#3a2a1a"/><path d="M343 728.500h2l-.3 5h-1.400z" fill="#4f7fd0"/><path d="M341.500 728l2.500 2.500 2.500-2.500" fill="none" stroke="#fff" stroke-width=".9"/>
<!-- social -->
<defs><linearGradient id="gGp" x1="0" y1="0" x2="1" y2="1"><stop offset="0" stop-color="#c8442e"/><stop offset="1" stop-color="#d9331a"/></linearGradient>
<linearGradient id="gFb" x1="0" y1="0" x2="0" y2="1"><stop offset="0" stop-color="#2f4f94"/><stop offset="1" stop-color="#4566ad"/></linearGradient>
<linearGradient id="gTw" x1="0" y1="0" x2="1" y2="1"><stop offset="0" stop-color="#1f8fc4"/><stop offset="1" stop-color="#3db4e4"/></linearGradient></defs>
<rect x="540" y="715" width="16" height="15.700" fill="url(#gGp)"/><text x="545.500" y="727" font-family="Liberation Serif, serif" font-size="17" fill="#fff" text-anchor="middle">g</text><text x="553" y="722.500" font-family="Liberation Sans, sans-serif" font-weight="bold" font-size="7.500" fill="#fff" text-anchor="middle">+</text>
<rect x="560" y="715" width="16" height="15.700" fill="url(#gFb)" stroke="#24407e" stroke-width=".8"/><rect x="562" y="727" width="8" height="1.300" fill="#8aa0d0" opacity=".7"/><text x="570.200" y="730.800" font-family="Liberation Sans, sans-serif" font-weight="bold" font-size="16" fill="#fff" text-anchor="middle">f</text>
<rect x="580" y="715" width="16" height="15.700" fill="url(#gTw)" stroke="#14597e" stroke-width="1"/><text x="588.300" y="728.500" font-family="Liberation Sans, sans-serif" font-weight="bold" font-size="15" fill="#f4fbff" text-anchor="middle">t</text>
<rect x="600.500" y="715.500" width="15" height="15" fill="#fff" stroke="#3f55b0" stroke-width="1.200"/>
<path d="M602.500 722.500h3v5.500h-3z" fill="#5a72c4" stroke="#2f46a8" stroke-width=".8"/><path d="M606 723l3.200-5.500c1.300 0 1.800 1 1.300 2.800l-.4 1.400h3.400v6h-7.500z" fill="#fff" stroke="#2f46a8" stroke-width="1.100"/>
<!-- banner -->
<rect x="655.500" y="711.500" width="177" height="20.500" rx="2.500" fill="url(#gBan)" stroke="#c4cbd8"/>
<path d="M655.500 731.500h177" stroke="#9aa3b5" stroke-width="1"/>
<path d="M658 720.500h3v6.500h-3zM661.500 721l3.200-5.500c1.400 0 1.900 1.200 1.300 3.200l-.3 1h3.300v6.800h-7.500z" fill="#fff" stroke="#2a4fb8" stroke-width="1.100"/>
<path d="M828 722.500h-3v-6.500h3zM824.500 722l-3.200 5.500c-1.400 0-1.900-1.200-1.300-3.200l.3-1h-3.300v-6.800h7.500z" fill="#fff" stroke="#cf2a2a" stroke-width="1.100"/>
<text x="672" y="720.100" font-family="Liberation Sans, sans-serif" font-weight="bold" font-size="9.900" fill="#1f3a9e" word-spacing="2" textLength="142.500" lengthAdjust="spacingAndGlyphs">WE ARE GOOD OR BAD?</text>
<text x="690.500" y="729.100" font-family="Liberation Sans, sans-serif" font-weight="bold" font-size="9.900" fill="#c8201e" word-spacing="2" textLength="120.500" lengthAdjust="spacingAndGlyphs">LET OTHERS KNOW...</text>
</svg>
<span class="t bt" id="bfront" style="left:61.200px;top:14px;transform:scaleX(0.94)">Front</span>
<span class="t bt" id="bback" style="left:149px;top:14px;color:#8d8d9b;transform:scaleX(0.861)">Back</span>
<span class="t bt" id="btpl" style="left:240px;top:14px;transform:scaleX(0.913)">Templates</span>
<span class="t bt" id="bup" style="left:353.500px;top:14px;transform:scaleX(0.882)">User Profile</span>
<span class="t bt" id="bshare" style="left:457px;top:14px;transform:scaleX(0.845)">Share Us On :</span>
</div>
</div>
<div id="wm" class="abs"><span class="t" id="wmt">Barcodefor.us</span></div>
</body>
</html>
